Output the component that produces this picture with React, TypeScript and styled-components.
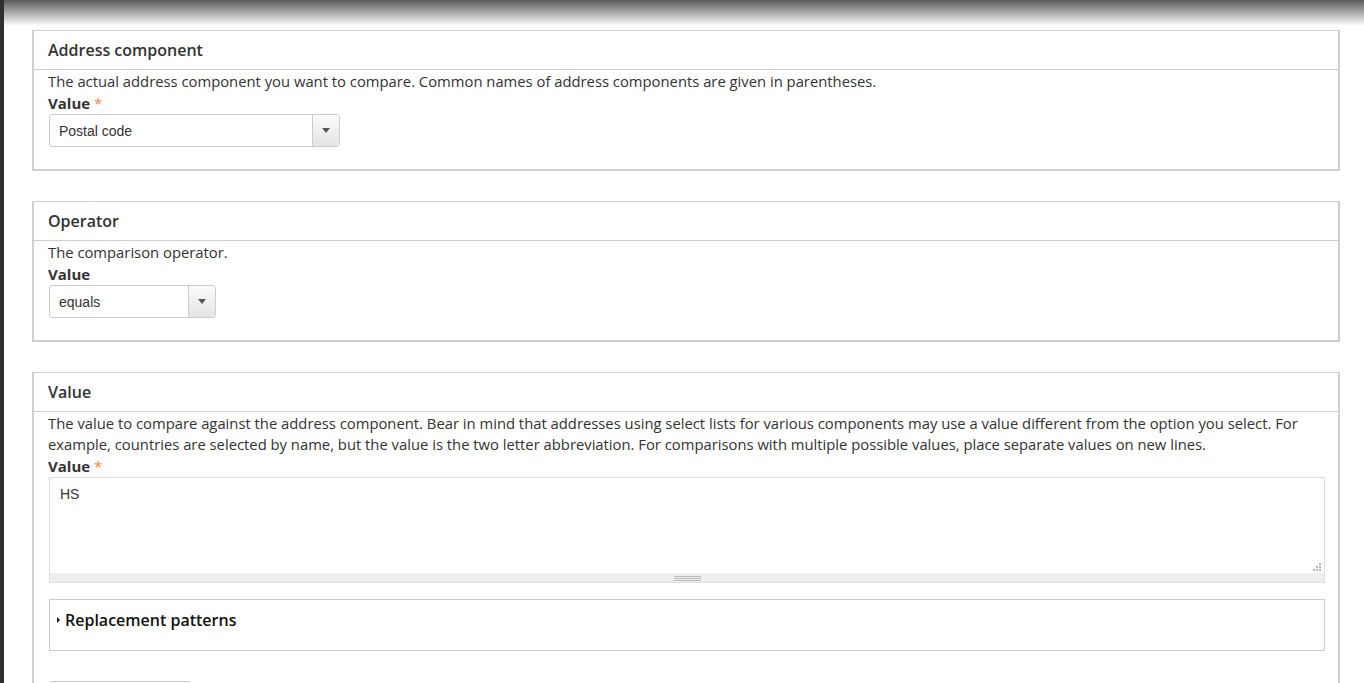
import styled, { createGlobalStyle } from "styled-components";

const GlobalStyle = createGlobalStyle`
  html, body {
    margin: 0;
    padding: 0;
    background: #ffffff;
    overflow: hidden;
  }
  body {
    font-family: "Open Sans", "Noto Sans", sans-serif;
    color: #333333;
  }
`;

const Frame = styled.div`
  position: relative;
  min-height: 683px;
  border-left: 4px solid #2f2f2f;
  padding: 30px 24px 0 28px;

  &::before {
    content: "";
    position: absolute;
    left: 0;
    right: 0;
    top: 0;
    height: 26px;
    background: linear-gradient(#5a5a5a, rgba(255, 255, 255, 0));
    pointer-events: none;
  }
`;

const Panel = styled.section<{ $open?: boolean }>`
  margin-bottom: 30px;
  border: 1px solid #cfcfcf;
  border-left-width: 2px;
  border-right-width: 2px;
  border-bottom-width: ${(p) => (p.$open ? "0" : "2px")};
`;

const PanelHeading = styled.div`
  height: 38px;
  display: flex;
  align-items: center;
  padding: 0 14px;
  border-bottom: 1px solid #cfcfcf;
  font-size: 16px;
  font-weight: 600;
  color: #333333;
`;

const PanelBody = styled.div`
  padding: 1px 13px 22px 14px;
`;

const Description = styled.p`
  margin: 0;
  font-size: 14.8px;
  line-height: 21px;
  color: #333333;
`;

const Label = styled.div`
  font-size: 15px;
  line-height: 22px;
  font-weight: 700;
  color: #333333;
`;

const Required = styled.span`
  color: #f0843d;
  font-weight: 400;
`;

const Select = styled.div<{ $width: number }>`
  width: ${(p) => p.$width}px;
  height: 31px;
  margin-left: 1px;
  display: flex;
  border: 1px solid #cccccc;
  border-radius: 3px;
  font-family: "Liberation Sans", Arial, sans-serif;
  font-size: 14px;
  color: #333333;
`;

const SelectValue = styled.div`
  flex: 1;
  display: flex;
  align-items: center;
  padding-left: 9px;
`;

const SelectArrow = styled.div`
  width: 26px;
  display: flex;
  align-items: center;
  justify-content: center;
  border-left: 1px solid #cccccc;
  border-radius: 0 3px 3px 0;
  background: linear-gradient(#fbfbfb, #e4e4e4);

  &::after {
    content: "";
    border-left: 4px solid transparent;
    border-right: 4px solid transparent;
    border-top: 5px solid #555555;
  }
`;

const TextArea = styled.div`
  margin-left: 1px;
  border: 1px solid #dddddd;
`;

const TextAreaField = styled.div`
  position: relative;
  height: 84px;
  padding: 8px 10px 3px;
  font-family: "Liberation Sans", Arial, sans-serif;
  font-size: 14px;
  color: #333333;
`;

const ResizeDots = styled.svg`
  position: absolute;
  right: 3px;
  bottom: 2px;
`;

const Grippie = styled.div`
  height: 8px;
  background: #eeeeee;
  border-top: 1px solid #eeeeee;
  display: flex;
  justify-content: center;
  align-items: center;

  &::after {
    content: "";
    width: 27px;
    height: 5px;
    border-top: 1px solid #bbbbbb;
    border-bottom: 1px solid #bbbbbb;
    background: linear-gradient(
      transparent 1px,
      #bbbbbb 1px,
      #bbbbbb 2px,
      transparent 2px
    );
    box-sizing: border-box;
  }
`;

const Collapsible = styled.div`
  box-sizing: border-box;
  margin: 16px 0 0 1px;
  height: 52px;
  border: 1px solid #cccccc;
  padding: 9px 7px 0;
  display: flex;
  align-items: flex-start;
`;

const CollapsibleTitle = styled.div`
  display: flex;
  align-items: center;
  gap: 5px;
  font-size: 16px;
  line-height: 22px;
  font-weight: 600;
  color: #111111;

  &::before {
    content: "";
    border-top: 3px solid transparent;
    border-bottom: 3px solid transparent;
    border-left: 3px solid #111111;
  }
`;

const Button = styled.div`
  margin: 30px 0 0 1px;
  width: 141px;
  height: 34px;
  border: 1px solid #cccccc;
  border-radius: 4px;
`;

const App = () => {
  return (
    <>
      <GlobalStyle />
      <Frame>
        <Panel>
          <PanelHeading>Address component</PanelHeading>
          <PanelBody>
            <Description>
              The actual address component you want to compare. Common names
              of address components are given in parentheses.
            </Description>
            <Label>
              Value <Required>*</Required>
            </Label>
            <Select $width={289}>
              <SelectValue>Postal code</SelectValue>
              <SelectArrow />
            </Select>
          </PanelBody>
        </Panel>

        <Panel>
          <PanelHeading>Operator</PanelHeading>
          <PanelBody>
            <Description>The comparison operator.</Description>
            <Label>Value</Label>
            <Select $width={165}>
              <SelectValue>equals</SelectValue>
              <SelectArrow />
            </Select>
          </PanelBody>
        </Panel>

        <Panel $open>
          <PanelHeading>Value</PanelHeading>
          <PanelBody>
            <Description>
              The value to compare against the address component. Bear in mind
              that addresses using select lists for various components may use
              a value different from the option you select. For example,
              countries are selected by name, but the value is the two letter
              abbreviation. For comparisons with multiple possible values,
              place separate values on new lines.
            </Description>
            <Label>
              Value <Required>*</Required>
            </Label>
            <TextArea>
              <TextAreaField>
                HS
                <ResizeDots width="8" height="8" viewBox="0 0 8 8">
                  <g fill="#b5b5b5">
                    <rect x="6" y="0" width="2" height="2" />
                    <rect x="3" y="3" width="2" height="2" />
                    <rect x="6" y="3" width="2" height="2" />
                    <rect x="0" y="6" width="2" height="2" />
                    <rect x="3" y="6" width="2" height="2" />
                    <rect x="6" y="6" width="2" height="2" />
                  </g>
                </ResizeDots>
              </TextAreaField>
              <Grippie />
            </TextArea>
            <Collapsible>
              <CollapsibleTitle>Replacement patterns</CollapsibleTitle>
            </Collapsible>
            <Button />
          </PanelBody>
        </Panel>
      </Frame>
    </>
  );
};

export default App;
